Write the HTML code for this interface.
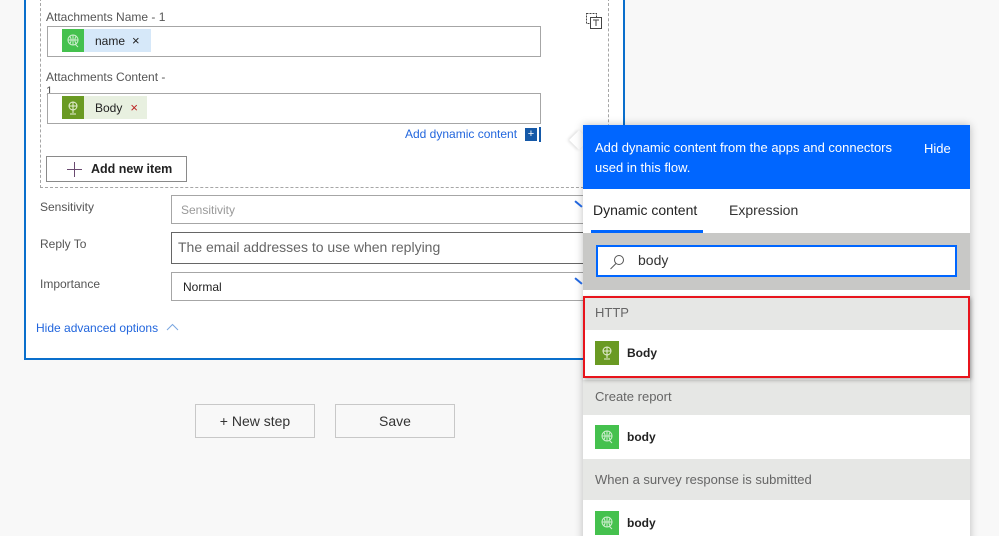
<!DOCTYPE html>
<html><head><meta charset="utf-8"><style>
*{box-sizing:border-box;margin:0;padding:0}
html,body{width:999px;height:536px;overflow:hidden}
body{background:#f8f8f8;font-family:"Segoe UI","Liberation Sans",sans-serif;font-size:13px;color:#333;position:relative}
.a{position:absolute}
.card{left:24px;top:-4px;width:601px;height:364px;background:#fff;border:2px solid #0a6fcc;border-top:none}
.dash{left:40px;top:-2px;width:569px;height:190px;border:1px dashed #a6a6a6;border-top:none}
.lbl{font-size:12px;color:#555}
.inp{background:#fff;border:1px solid #a6a6a6}
.tok{height:23px;display:flex;align-items:center;font-size:12px;color:#222}
.ic{width:22px;height:23px;display:flex;align-items:center;justify-content:center}
.btn{border:1px solid #c8c8c8;background:#f8f8f8;font-size:14px;text-align:center;line-height:32px;color:#333}
.panel{left:583px;top:125px;width:387px;height:420px;background:#fff;box-shadow:0 0 8px rgba(0,0,0,.25)}
.hdr{background:#e6e7e5;color:#666;font-size:13px;padding-left:12px}
.row{background:#fff;display:flex;align-items:center;padding-left:12px;font-weight:bold;font-size:12px;color:#222}
.sq{width:24px;height:24px;margin-right:8px;display:flex;align-items:center;justify-content:center}
</style></head><body>
<div class="a card"></div>
<div class="a dash"></div>
<div class="a lbl" style="left:46px;top:10px">Attachments Name - 1</div>
<div class="a inp" style="left:47px;top:26px;width:494px;height:31px"></div>
<div class="a tok" style="left:62px;top:29px;background:#d6e8f9;width:89px">
 <div class="ic" style="background:#45c14e"><svg width="14" height="14" viewBox="0 0 14 14" fill="none" stroke="#cfeecf" stroke-width="1"><circle cx="7" cy="6" r="5"/><path d="M2 6h10M7 1v10M4 2.5c1.5 2 1.5 5 0 7M10 2.5c-1.5 2-1.5 5 0 7"/><path d="M9 10l3 3"/></svg></div>
 <span style="margin-left:11px">name</span><span style="margin-left:7px;font-size:13px">×</span></div>
<div class="a lbl" style="left:46px;top:70px;line-height:14px">Attachments Content -<br>1</div>
<div class="a inp" style="left:47px;top:93px;width:494px;height:31px"></div>
<div class="a tok" style="left:62px;top:96px;background:#e8f0e0;width:85px">
 <div class="ic" style="background:#6a9a23"><svg width="12" height="14" viewBox="0 0 12 14" fill="none" stroke="#e8f0d8" stroke-width="1"><circle cx="6" cy="5" r="4"/><path d="M2 5h8M6 1v8M6 9v3M3 13h6"/></svg></div>
 <span style="margin-left:11px">Body</span><span style="margin-left:8px;font-size:13px;color:#b22">×</span></div>
<div class="a" style="left:405px;top:127px;font-size:12px;color:#2266dd">Add dynamic content</div>
<div class="a" style="left:525px;top:128px;width:12px;height:13px;background:#1559a8;color:#fff;font-size:11px;line-height:12px;text-align:center">+</div>
<div class="a" style="left:539px;top:127px;width:2px;height:15px;background:#1559a8"></div>
<div class="a" style="left:586px;top:13px;width:16px;height:16px"><svg width="16" height="16" viewBox="0 0 16 16" fill="none" stroke="#444"><rect x="0.5" y="0.5" width="10" height="10" stroke-dasharray="2 1"/><rect x="4.5" y="4.5" width="11" height="11" fill="#fff"/><path d="M7 7h6M10 7v6"/></svg></div>
<div class="a" style="left:46px;top:156px;width:141px;height:26px;border:1px solid #8a8a8a;background:#fff;font-size:12.5px;line-height:24px;color:#222"><span style="position:absolute;left:20px;top:5px;width:15px;height:15px"><span style="position:absolute;left:7px;top:0;width:1px;height:15px;background:#6a4a70"></span><span style="position:absolute;left:0;top:7px;width:15px;height:1px;background:#6a4a70"></span></span><span style="position:absolute;left:44px;font-weight:600">Add new item</span></div>
<div class="a lbl" style="left:40px;top:200px">Sensitivity</div>
<div class="a inp" style="left:171px;top:195px;width:420px;height:29px;font-size:12px;color:#999;padding:7px 9px">Sensitivity</div>
<div class="a lbl" style="left:40px;top:237px">Reply To</div>
<div class="a inp" style="left:171px;top:232px;width:420px;height:32px;border-color:#666;font-size:14px;color:#666;padding:6px 6px">The email addresses to use when replying</div>
<div class="a lbl" style="left:40px;top:277px">Importance</div>
<div class="a inp" style="left:171px;top:272px;width:420px;height:29px;font-size:12px;color:#222;padding:7px 11px">Normal</div>
<div class="a" style="left:36px;top:321px;font-size:12px;color:#2266dd">Hide advanced options</div>
<svg class="a" style="left:166px;top:323px" width="13" height="8" viewBox="0 0 13 8" fill="none" stroke="#7aa6e0"><path d="M1 7l5.5-5.5L12 7"/></svg>
<div class="a btn" style="left:195px;top:404px;width:120px;height:34px">+ New step</div>
<div class="a btn" style="left:335px;top:404px;width:120px;height:34px">Save</div>
<div class="a" style="left:572px;top:133px;width:14px;height:14px;background:#fff;transform:rotate(45deg);box-shadow:-1px 1px 3px rgba(0,0,0,.15)"></div>
<div class="a panel">
 <div style="background:#0066ff;height:64px;color:#fff;font-size:13px;padding:13px 12px;line-height:20px;position:relative">Add dynamic content from the apps and connectors<br>used in this flow.<span style="position:absolute;left:341px;top:14px">Hide</span></div>
 <div style="height:44px;position:relative;font-size:14px">
  <span class="a" style="left:10px;top:13px;color:#222">Dynamic content</span>
  <span class="a" style="left:146px;top:13px;color:#333">Expression</span>
  <div class="a" style="left:8px;top:41px;width:112px;height:3px;background:#0066ff"></div>
 </div>
 <div style="height:57px;background:#c8c8c6;padding:12px 13px">
  <div style="height:32px;border:2px solid #0066ff;background:#fff;position:relative">
   <svg class="a" style="left:11px;top:7px" width="16" height="16" viewBox="0 0 16 16" fill="none" stroke="#555"><circle cx="10" cy="6" r="4.5"/><path d="M7 9.5L1.5 15"/></svg>
   <span class="a" style="left:40px;top:5px;font-size:14px;color:#333">body</span>
  </div>
 </div>
 <div style="height:8px"></div>
 <div class="hdr" style="height:32px;line-height:30px">HTTP</div>
 <div class="row" style="height:45px"><div class="sq" style="background:#6a9a23"><svg width="12" height="14" viewBox="0 0 12 14" fill="none" stroke="#e8f0d8"><circle cx="6" cy="5" r="4"/><path d="M2 5h8M6 1v8M6 9v3M3 13h6"/></svg></div>Body</div>
 <div style="height:5px;background:#fff"></div>
 <div class="hdr" style="height:35px;line-height:34px">Create report</div>
 <div class="row" style="height:44px"><div class="sq" style="background:#45c14e"><svg width="14" height="14" viewBox="0 0 14 14" fill="none" stroke="#cfeecf"><circle cx="7" cy="6" r="5"/><path d="M2 6h10M7 1v10M4 2.5c1.5 2 1.5 5 0 7M10 2.5c-1.5 2-1.5 5 0 7M9 10l3 3"/></svg></div>body</div>
 <div class="hdr" style="height:41px;line-height:42px">When a survey response is submitted</div>
 <div class="row" style="height:45px"><div class="sq" style="background:#45c14e"><svg width="14" height="14" viewBox="0 0 14 14" fill="none" stroke="#cfeecf"><circle cx="7" cy="6" r="5"/><path d="M2 6h10M7 1v10M4 2.5c1.5 2 1.5 5 0 7M10 2.5c-1.5 2-1.5 5 0 7M9 10l3 3"/></svg></div>body</div>
</div>
<div class="a" style="left:583px;top:296px;width:387px;height:82px;border:2px solid #e8141c;box-shadow:1px 2px 4px rgba(0,0,0,.3)"></div>
<div class="a" style="left:574px;top:203px;width:9px;height:2px;background:#2266dd;transform:rotate(40deg)"></div>
<div class="a" style="left:574px;top:280px;width:9px;height:2px;background:#2266dd;transform:rotate(40deg)"></div>
</body></html>
